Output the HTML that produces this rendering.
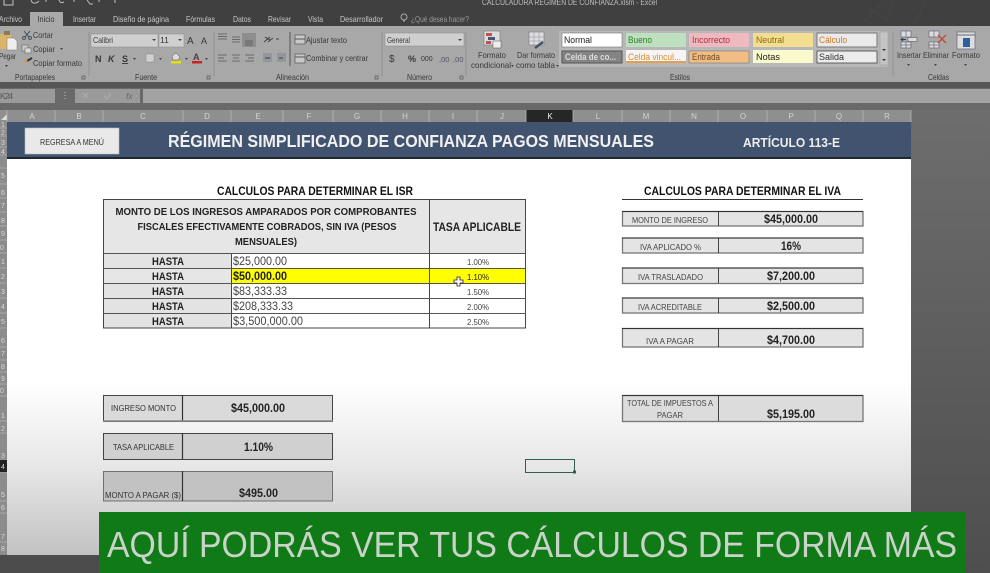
<!DOCTYPE html>
<html><head><meta charset="utf-8"><style>
html,body{margin:0;padding:0;background:#555;width:990px;height:573px;overflow:hidden}
svg{display:block}
text{font-family:"Liberation Sans",sans-serif;white-space:pre}
.r text{fill:#383838;font-size:8.5px}
.b{font-weight:bold}
</style></head><body>
<svg width="990" height="573" viewBox="0 0 990 573" xmlns="http://www.w3.org/2000/svg">
<defs>
<linearGradient id="sheet" x1="0" y1="0" x2="0" y2="1"><stop offset="0" stop-color="#fff"/><stop offset=".6" stop-color="#fff"/><stop offset=".8" stop-color="#e6e6e6"/><stop offset="1" stop-color="#c2c2c2"/></linearGradient>
<linearGradient id="side" x1="0" y1="0" x2="0" y2="1"><stop offset="0" stop-color="#6e6e6e"/><stop offset="1" stop-color="#4e4e4e"/></linearGradient>
<filter id="bl"><feGaussianBlur stdDeviation=".3"/></filter>
</defs>
<rect width="990" height="573" fill="#4c4c4c"/>
<rect x="911" y="103" width="79" height="470" fill="url(#side)"/>

<g filter="url(#bl)">
<!-- title bar -->
<rect width="990" height="26" fill="#3f3f3f"/>
<path d="M860 26l25-26M885 22l8-20M915 24l10-22M870 8l20 14" stroke="#464646" fill="none"/>
<rect x="4" y="-2" width="9" height="7" fill="none" stroke="#c4c4c4"/>
<path d="M31 0c1 4 5 4 8 1M45 1h2M59 0c1 3 3 3 5 2M73 1h2M87 0l3 4h3M98 1h2M115 0v3" stroke="#bbb" fill="none"/>
<text x="482" y="5" font-size="8" fill="#c0c0c0" textLength="175" lengthAdjust="spacingAndGlyphs">CALCULADORA REGIMEN DE CONFIANZA.xlsm - Excel</text>
<g fill="#c8c8c8" font-size="8.500">
<text x="-1" y="22" textLength="23" lengthAdjust="spacingAndGlyphs">Archivo</text>
<text x="73" y="22" textLength="23" lengthAdjust="spacingAndGlyphs">Insertar</text>
<text x="113" y="22" textLength="56" lengthAdjust="spacingAndGlyphs">Diseño de página</text>
<text x="186" y="22" textLength="29" lengthAdjust="spacingAndGlyphs">Fórmulas</text>
<text x="233" y="22" textLength="18" lengthAdjust="spacingAndGlyphs">Datos</text>
<text x="268" y="22" textLength="23" lengthAdjust="spacingAndGlyphs">Revisar</text>
<text x="308" y="22" textLength="15" lengthAdjust="spacingAndGlyphs">Vista</text>
<text x="340" y="22" textLength="43" lengthAdjust="spacingAndGlyphs">Desarrollador</text>
<text x="411" y="22" fill="#9a9a9a" textLength="58" lengthAdjust="spacingAndGlyphs">¿Qué desea hacer?</text>
</g>
<circle cx="404" cy="17" r="3" fill="none" stroke="#aaa"/><path d="M403 21h2" stroke="#aaa"/>
<rect x="30" y="12" width="33" height="15" fill="#a9a9a9"/>

<!-- ribbon -->
<rect y="26" width="990" height="56" fill="#a8a8a8"/>
<rect y="82" width="990" height="6" fill="#565656"/>
<g class="r">
<text x="37.500" y="22" style="fill:#333" textLength="17" lengthAdjust="spacingAndGlyphs">Inicio</text>
<!-- clipboard -->
<rect x="0" y="34" width="11" height="15" fill="#d9b56b"/><rect x="4" y="31" width="6" height="4" fill="#8a7a5a"/><path d="M7 38h7l3 3v9h-10z" fill="#eee" stroke="#777" stroke-width=".5"/>
<text x="-1" y="59" textLength="17" lengthAdjust="spacingAndGlyphs">Pegar</text>
<path d="M5 65h3l-1.500 2z" fill="#444"/>
<path d="M24 31l5 6M30 31l-5 6" stroke="#456" fill="none"/><circle cx="24" cy="38" r="1.500" fill="none" stroke="#456"/><circle cx="30" cy="38" r="1.500" fill="none" stroke="#456"/>
<rect x="22" y="45" width="6" height="6" fill="#ccc" stroke="#666" stroke-width=".6"/><rect x="25" y="48" width="6" height="5" fill="#ddd" stroke="#666" stroke-width=".6"/>
<path d="M27 61l5-3" stroke="#333" stroke-width="2"/><path d="M24 62l3-2" stroke="#c9a040" stroke-width="2"/>
<text x="33" y="38" textLength="20" lengthAdjust="spacingAndGlyphs">Cortar</text>
<text x="33" y="52" textLength="22" lengthAdjust="spacingAndGlyphs">Copiar</text>
<path d="M60 48h3l-1.500 2z" fill="#444"/>
<text x="33" y="66" textLength="49" lengthAdjust="spacingAndGlyphs">Copiar formato</text>
<text x="15" y="80" textLength="40" lengthAdjust="spacingAndGlyphs">Portapapeles</text>
<path d="M89 32v44M214 32v44M382 32v44M466 32v44M893 32v44" stroke="#929292"/>
<path d="M82 76h3v3h-3zM207 76h3v3h-3zM375 76h3v3h-3zM460 76h3v3h-3z" fill="none" stroke="#555" stroke-width=".7"/>

<!-- font -->
<rect x="91" y="34" width="67" height="13" fill="#cfcfcf" stroke="#8a8a8a" stroke-width=".5"/>
<rect x="159" y="34" width="25" height="13" fill="#cfcfcf" stroke="#8a8a8a" stroke-width=".5"/>
<text x="93" y="43" textLength="20" lengthAdjust="spacingAndGlyphs">Calibri</text>
<text x="160" y="43">11</text>
<path d="M152 39h4l-2 2zM178 39h4l-2 2z" fill="#444"/>
<text x="187" y="44" style="font-size:10px">A</text><text x="201" y="44" style="font-size:9px">A</text>
<text x="95" y="62" class="b" style="font-size:9px" textLength="6">N</text>
<text x="108" y="62" class="b" font-style="italic" style="font-size:9px" textLength="6">K</text>
<text x="122" y="62" class="b" text-decoration="underline" style="font-size:9px" textLength="5">S</text>
<path d="M133 58h3l-1.500 2zM159 58h3l-1.500 2zM185 58h3l-1.500 2zM205 58h3l-1.500 2z" fill="#444"/>
<rect x="146" y="54" width="8" height="8" fill="#d0d0d0" stroke="#888" stroke-width=".5"/>
<path d="M172 56l4-3 4 4-2 3h-5z" fill="#ddd" stroke="#555" stroke-width=".5"/>
<rect x="171" y="61" width="10" height="2.500" fill="#e3e000"/>
<text x="193" y="60" class="b" style="fill:#444;font-size:9px">A</text>
<rect x="192" y="61" width="10" height="2.500" fill="#c22"/>
<text x="135" y="80" textLength="22" lengthAdjust="spacingAndGlyphs">Fuente</text>

<!-- align -->
<rect x="242" y="33" width="14" height="14" fill="#8e8e8e"/>
<g stroke="#555" fill="none" stroke-width=".8">
<path d="M218 34h9M218 36.500h9M218 39h9M232 37h8M232 39.500h8M232 42h8M245 41h8M245 43h8M245 45h8"/>
<path d="M218 55h9M218 58h6M218 61h9M232 55h8M233 58h6M232 61h8M245 55h9M248 58h6M245 61h9"/>
</g>
<path d="M264 42l6-5M265 37l5 3M268 42l5-4M276 39h3" stroke="#444" stroke-width="1.100" fill="none"/>
<rect x="263" y="53" width="9" height="9" fill="#969696"/><rect x="277" y="53" width="9" height="9" fill="#969696"/>
<path d="M265 58h5M283 58h-4" stroke="#246" fill="none"/>
<path d="M290 32v34" stroke="#555"/>
<rect x="295" y="35" width="10" height="9" fill="#c8c8c8" stroke="#555" stroke-width=".7"/><path d="M295 39h10" stroke="#555"/>
<rect x="295" y="54" width="10" height="9" fill="#c8c8c8" stroke="#555" stroke-width=".7"/><path d="M295 57h10" stroke="#555"/>
<text x="306" y="43" textLength="41" lengthAdjust="spacingAndGlyphs">Ajustar texto</text>
<text x="306" y="61" textLength="62" lengthAdjust="spacingAndGlyphs">Combinar y centrar</text>
<text x="276" y="80" textLength="33" lengthAdjust="spacingAndGlyphs">Alineación</text>

<!-- number -->
<rect x="385" y="33" width="79" height="13" fill="#cfcfcf" stroke="#8a8a8a" stroke-width=".5"/>
<text x="387" y="43" textLength="23" lengthAdjust="spacingAndGlyphs">General</text>
<path d="M458 39h4l-2 2z" fill="#444"/>
<text x="389" y="62" style="font-size:10px">$</text><text x="408" y="62" class="b" style="font-size:9px">%</text><text x="421" y="61" style="font-size:7px">000</text>
<text x="439" y="62" style="font-size:7.500px;fill:#556">,00</text><text x="453" y="62" style="font-size:7.500px;fill:#556">,00</text>
<text x="407" y="80" textLength="25" lengthAdjust="spacingAndGlyphs">Número</text>

<!-- cond format -->
<rect x="484" y="31" width="16" height="14" fill="#ddd" stroke="#777" stroke-width=".6"/>
<rect x="486" y="33" width="6" height="3" fill="#b55"/><rect x="488" y="37" width="7" height="3" fill="#457"/><rect x="486" y="41" width="5" height="3" fill="#b55"/>
<rect x="493" y="41" width="8" height="7" fill="#eee" stroke="#555" stroke-width=".5"/>
<text x="478" y="58" textLength="28" lengthAdjust="spacingAndGlyphs">Formato</text>
<text x="471" y="68" textLength="40" lengthAdjust="spacingAndGlyphs">condicional</text>
<rect x="529" y="32" width="15" height="13" fill="#ddd" stroke="#778" stroke-width=".6"/>
<path d="M534 32v13M539 32v13M529 37h15M529 41h15" stroke="#889" stroke-width=".5"/>
<path d="M535 48l8-6" stroke="#456" stroke-width="2.500"/>
<text x="517" y="58" textLength="38" lengthAdjust="spacingAndGlyphs">Dar formato</text>
<text x="516" y="68" textLength="39" lengthAdjust="spacingAndGlyphs">como tabla</text>
<path d="M511 65h3l-1.500 2zM556 65h3l-1.500 2z" fill="#444"/>

<!-- styles -->
<rect x="559" y="31" width="329" height="36" fill="#b8b8b8"/>
<rect x="562" y="33" width="60" height="14" fill="#fff" stroke="#777" stroke-width=".6"/>
<rect x="626" y="33" width="60" height="14" fill="#bfe0bf"/>
<rect x="689" y="33" width="60" height="14" fill="#f0b9c0"/>
<rect x="753" y="33" width="60" height="14" fill="#f2dd90"/>
<rect x="817" y="33" width="60" height="14" fill="#eaeaea" stroke="#777"/>
<rect x="562" y="51" width="60" height="12" fill="#848484" stroke="#555"/>
<rect x="626" y="50" width="60" height="13" fill="#f5f5f5"/><rect x="626" y="61" width="60" height="2" fill="#e0a050"/>
<rect x="689" y="51" width="60" height="12" fill="#f2bd84" stroke="#777" stroke-width=".6"/>
<rect x="753" y="50" width="60" height="13" fill="#fafacc"/>
<rect x="817" y="51" width="60" height="12" fill="#ececec" stroke="#444" stroke-width=".8"/>
<text x="564" y="43" style="fill:#222;font-size:9px" textLength="28" lengthAdjust="spacingAndGlyphs">Normal</text>
<text x="628" y="43" style="fill:#2d7a2d;font-size:9px" textLength="24" lengthAdjust="spacingAndGlyphs">Bueno</text>
<text x="692" y="43" style="fill:#a8303c;font-size:9px" textLength="38" lengthAdjust="spacingAndGlyphs">Incorrecto</text>
<text x="756" y="43" style="fill:#8a6a10;font-size:9px" textLength="28" lengthAdjust="spacingAndGlyphs">Neutral</text>
<text x="819" y="43" style="fill:#d07820;font-size:9px" textLength="28" lengthAdjust="spacingAndGlyphs">Cálculo</text>
<text x="565" y="60" style="fill:#ddd;font-size:9px" class="b" textLength="51" lengthAdjust="spacingAndGlyphs">Celda de co...</text>
<text x="628" y="60" style="fill:#d88a30;font-size:9px" textLength="53" lengthAdjust="spacingAndGlyphs">Celda vincul...</text>
<text x="692" y="60" style="fill:#6c4a20;font-size:9px" textLength="28" lengthAdjust="spacingAndGlyphs">Entrada</text>
<text x="756" y="60" style="fill:#222;font-size:9px" textLength="24" lengthAdjust="spacingAndGlyphs">Notas</text>
<text x="819" y="60" style="fill:#333;font-size:9px" textLength="25" lengthAdjust="spacingAndGlyphs">Salida</text>
<rect x="880" y="32" width="8" height="33" fill="#c4c4c4" stroke="#999" stroke-width=".5"/>
<path d="M882 49h4l-2 2zM882 59h4l-2 2z" fill="#333"/>
<text x="670" y="80" textLength="20" lengthAdjust="spacingAndGlyphs">Estilos</text>

<!-- cells -->
<g fill="#ddd" stroke="#667" stroke-width=".7">
<rect x="901" y="31" width="10" height="6"/><path d="M906 31v6"/>
<rect x="901" y="42" width="10" height="6"/><path d="M906 42v6M901 45h10"/>
<rect x="908" y="37.500" width="9" height="4"/>
<rect x="929" y="31" width="10" height="6"/><path d="M934 31v6"/>
<rect x="929" y="42" width="10" height="6"/><path d="M934 42v6M929 45h10"/>
<rect x="957" y="32" width="18" height="17"/>
</g>
<path d="M901 39.500h5M903 38l-2 1.500 2 1.500" stroke="#246" fill="none"/>
<path d="M938 35l8 8M946 35l-8 8" stroke="#c04a30" stroke-width="1.300"/>
<rect x="963" y="38" width="7" height="9" fill="#2f5f9f"/>
<path d="M957 35h18" stroke="#667"/>
<text x="897" y="58" textLength="24" lengthAdjust="spacingAndGlyphs">Insertar</text>
<text x="923" y="58" textLength="26" lengthAdjust="spacingAndGlyphs">Eliminar</text>
<text x="952" y="58" textLength="28" lengthAdjust="spacingAndGlyphs">Formato</text>
<path d="M907 64h3l-1.500 2zM934 64h3l-1.500 2zM964 64h3l-1.500 2z" fill="#444"/>
<text x="928" y="80" textLength="21" lengthAdjust="spacingAndGlyphs">Celdas</text>
</g>

<!-- formula bar -->
<rect y="88" width="990" height="22" fill="#696969"/>
<rect x="-1" y="89" width="56" height="14" fill="#9a9a9a"/>
<text x="0" y="99" font-size="8.500" fill="#555" textLength="13">K24</text>
<rect x="75" y="89" width="65" height="14" fill="#9a9a9a"/>
<path d="M83 93l5 5M88 93l-5 5M104 96l3 3 4-6" stroke="#aeaeae" fill="none"/>
<text x="126" y="99" font-size="8.500" font-style="italic" fill="#666">fx</text>
<rect x="143" y="89" width="847" height="14" fill="#a3a3a3"/>
<path d="M65 92v1M65 95v1M65 98v1" stroke="#c0c0c0"/>

<!-- column headers -->
<rect x="0" y="110" width="911" height="12" fill="#8f8f8f"/>
<path d="M1 120l6-6v6z" fill="#ddd"/>
<rect x="526" y="110" width="47" height="12" fill="#262626"/>
<g stroke="#b5b5b5" stroke-width=".8"><path d="M7 110v12M55 110v12M103 110v12M183 110v12M231 110v12M283 110v12M333 110v12M381 110v12M429 110v12M477 110v12M526 110v12M573 110v12M622 110v12M670 110v12M718 110v12M767 110v12M815 110v12M863 110v12M911 110v12"/></g>
<g font-size="8" fill="#d2d2d2" text-anchor="middle">
<text x="32" y="119">A</text><text x="79" y="119">B</text><text x="143" y="119">C</text><text x="207" y="119">D</text><text x="258" y="119">E</text><text x="309" y="119">F</text><text x="357" y="119">G</text><text x="405" y="119">H</text><text x="453" y="119">I</text><text x="502" y="119">J</text><text x="550" y="119" fill="#eee">K</text><text x="598" y="119">L</text><text x="646" y="119">M</text><text x="694" y="119">N</text><text x="743" y="119">O</text><text x="791" y="119">P</text><text x="839" y="119">Q</text><text x="887" y="119">R</text>
</g>
</g>

<!-- sheet -->
<rect x="7" y="122" width="904" height="433" fill="url(#sheet)"/>
<rect x="0" y="122" width="7" height="433" fill="#8c8c8c"/>
<g stroke="#b0b0b0" stroke-width=".7"><path d="M0 128h7M0 136h7M0 147h7M0 155h7M0 168h7M0 184h7M0 198h7M0 212h7M0 226h7M0 240h7M0 253h7M0 268h7M0 283h7M0 298h7M0 313h7M0 328h7M0 347h7M0 360h7M0 372h7M0 384h7M0 396h7M0 421h7M0 433h7M0 460h7M0 472h7M0 501h7M0 513h7M0 542h7"/></g>
<rect x="0" y="460" width="7" height="12" fill="#222"/>
<g font-size="7" fill="#d8d8d8">
<text x="1" y="127">1</text><text x="1" y="135">2</text><text x="1" y="145">3</text><text x="1" y="154">4</text><text x="1" y="178">5</text><text x="1" y="195">6</text><text x="1" y="208">7</text><text x="1" y="223">8</text><text x="1" y="236">9</text><text x="0" y="250">0</text><text x="1" y="264">1</text><text x="1" y="279">2</text><text x="1" y="294">3</text><text x="1" y="309">4</text><text x="1" y="324">5</text><text x="1" y="343">6</text><text x="1" y="356">7</text><text x="1" y="369">8</text><text x="1" y="381">9</text><text x="0" y="393">0</text><text x="1" y="418">1</text><text x="1" y="431">2</text><text x="1" y="458">3</text><text x="1" y="469">4</text><text x="1" y="497">5</text><text x="1" y="510">6</text><text x="1" y="539">7</text><text x="1" y="551">8</text>
</g>

<!-- banner -->
<rect x="7" y="122" width="904" height="36" fill="#425370"/>
<rect x="7" y="157" width="904" height="2" fill="#1e2630"/>
<rect x="25" y="128" width="94" height="26" fill="#e9e9e9" stroke="#bbb" stroke-width=".6"/>
<text x="40" y="145" font-size="8.500" fill="#333" textLength="64" lengthAdjust="spacingAndGlyphs">REGRESA A MENÚ</text>
<text x="168" y="147" font-size="17.500" class="b" fill="#f0f0f0" textLength="486" lengthAdjust="spacingAndGlyphs">RÉGIMEN SIMPLIFICADO DE CONFIANZA PAGOS MENSUALES</text>
<text x="743" y="147" font-size="13" class="b" fill="#eee" textLength="97" lengthAdjust="spacingAndGlyphs">ARTÍCULO 113-E</text>

<!-- ISR table -->
<text x="217" y="195" font-size="11.500" class="b" fill="#111" textLength="196" lengthAdjust="spacingAndGlyphs">CALCULOS PARA DETERMINAR EL ISR</text>
<rect x="103" y="199" width="422.500" height="54" fill="#e6e6e6"/>
<rect x="103" y="253" width="128" height="75" fill="#e3e3e3"/>
<rect x="231" y="268" width="295" height="15" fill="#ffff00"/>
<rect x="103" y="268" width="128" height="15" fill="#e6e6e6"/>
<g stroke="#333" stroke-width=".9" fill="none">
<rect x="103.500" y="199.500" width="422" height="128.500"/>
<path d="M429.500 199v129M231.500 253v75"/>
<path d="M103 253.500h423M103 268.500h423M103 283.500h423M103 298.500h423M103 313.500h423" stroke="#555"/>
</g>
<g font-size="10.500" class="b" fill="#222" text-anchor="middle">
<text x="266" y="215" textLength="301" lengthAdjust="spacingAndGlyphs">MONTO DE LOS INGRESOS AMPARADOS POR COMPROBANTES</text>
<text x="267" y="230" textLength="259" lengthAdjust="spacingAndGlyphs">FISCALES EFECTIVAMENTE COBRADOS, SIN IVA (PESOS</text>
<text x="266" y="245" textLength="62" lengthAdjust="spacingAndGlyphs">MENSUALES)</text>
</g>
<text x="433" y="231" font-size="11.500" class="b" fill="#222" textLength="88" lengthAdjust="spacingAndGlyphs">TASA APLICABLE</text>
<g font-size="11" class="b" fill="#222">
<text x="152" y="265" textLength="32" lengthAdjust="spacingAndGlyphs">HASTA</text>
<text x="152" y="280" textLength="32" lengthAdjust="spacingAndGlyphs">HASTA</text>
<text x="152" y="295" textLength="32" lengthAdjust="spacingAndGlyphs">HASTA</text>
<text x="152" y="310" textLength="32" lengthAdjust="spacingAndGlyphs">HASTA</text>
<text x="152" y="325" textLength="32" lengthAdjust="spacingAndGlyphs">HASTA</text>
</g>
<g font-size="11.500" fill="#444">
<text x="233" y="265" textLength="54" lengthAdjust="spacingAndGlyphs">$25,000.00</text>
<text x="233" y="280" class="b" fill="#222" textLength="54" lengthAdjust="spacingAndGlyphs">$50,000.00</text>
<text x="233" y="295" textLength="54" lengthAdjust="spacingAndGlyphs">$83,333.33</text>
<text x="233" y="310" textLength="60" lengthAdjust="spacingAndGlyphs">$208,333.33</text>
<text x="233" y="325" textLength="70" lengthAdjust="spacingAndGlyphs">$3,500,000.00</text>
</g>
<g font-size="8" fill="#444">
<text x="467" y="265" textLength="22" lengthAdjust="spacingAndGlyphs">1.00%</text>
<text x="467" y="280" fill="#222" textLength="22" lengthAdjust="spacingAndGlyphs">1.10%</text>
<text x="467" y="295" textLength="22" lengthAdjust="spacingAndGlyphs">1.50%</text>
<text x="467" y="310" textLength="22" lengthAdjust="spacingAndGlyphs">2.00%</text>
<text x="467" y="325" textLength="22" lengthAdjust="spacingAndGlyphs">2.50%</text>
</g>
<path d="M457 277h3v3h3v3h-3v3h-3v-3h-3v-3h3z" fill="#fff" stroke="#222" stroke-width=".8"/>

<!-- bottom left boxes -->
<g stroke="#333" fill="#d6d6d6" stroke-width=".9">
<rect x="103.500" y="395.500" width="229" height="26" fill="#dadada"/>
<rect x="103.500" y="433.500" width="229" height="26" fill="#d0d0d0"/>
<rect x="103.500" y="471.500" width="229" height="29.500" fill="#c2c2c2" stroke="#666"/>
<path d="M182.500 395v26M182.500 433v26M182.500 471v30" stroke-width="1.200"/>
<path d="M103 421h230" stroke="#8a8a8a" stroke-width="1.400"/>
</g>
<g fill="#333" font-size="8.500">
<text x="111" y="411" textLength="65" lengthAdjust="spacingAndGlyphs">INGRESO MONTO</text>
<text x="113" y="450" textLength="61" lengthAdjust="spacingAndGlyphs">TASA APLICABLE</text>
<text x="105" y="498" textLength="76" lengthAdjust="spacingAndGlyphs">MONTO A PAGAR ($)</text>
</g>
<g fill="#222" font-size="11.500" class="b">
<text x="231" y="412" textLength="54" lengthAdjust="spacingAndGlyphs">$45,000.00</text>
<text x="244" y="451" textLength="29" lengthAdjust="spacingAndGlyphs">1.10%</text>
<text x="239" y="497" textLength="39" lengthAdjust="spacingAndGlyphs">$495.00</text>
</g>

<!-- IVA -->
<text x="644" y="195" font-size="11.500" class="b" fill="#111" textLength="197" lengthAdjust="spacingAndGlyphs">CALCULOS PARA DETERMINAR EL IVA</text>
<path d="M622 199.500h241" stroke="#333"/>
<g stroke="#777" stroke-width="1.300" fill="#e4e4e4">
<rect x="622.500" y="211.500" width="240.500" height="14.500"/>
<rect x="622.500" y="238" width="240.500" height="15"/>
<rect x="622.500" y="268" width="240.500" height="15.500"/>
<rect x="622.500" y="298" width="240.500" height="15"/>
<rect x="622.500" y="328.500" width="240.500" height="18.500"/>
<rect x="622.500" y="395.500" width="240.500" height="26" fill="#dcdcdc"/>
<path d="M718.500 211v15M718.500 238v15M718.500 268v15M718.500 298v15M718.500 328v19M718.500 395v26M622 211.500h241M622 238h241M622 268h241M622 298h241M622 328.500h241M622 395.500h241" stroke="#333" stroke-width=".9"/>
</g>
<g fill="#444" font-size="8.500">
<text x="632" y="223" textLength="76" lengthAdjust="spacingAndGlyphs">MONTO DE INGRESO</text>
<text x="640" y="250" textLength="61" lengthAdjust="spacingAndGlyphs">IVA APLICADO %</text>
<text x="638" y="280" textLength="65" lengthAdjust="spacingAndGlyphs">IVA TRASLADADO</text>
<text x="638" y="310" textLength="64" lengthAdjust="spacingAndGlyphs">IVA ACREDITABLE</text>
<text x="646" y="344" textLength="48" lengthAdjust="spacingAndGlyphs">IVA A PAGAR</text>
<text x="627" y="406" textLength="86" lengthAdjust="spacingAndGlyphs">TOTAL DE IMPUESTOS A</text>
<text x="657" y="418" textLength="26" lengthAdjust="spacingAndGlyphs">PAGAR</text>
</g>
<g fill="#222" font-size="11.500" class="b">
<text x="764" y="223" textLength="54" lengthAdjust="spacingAndGlyphs">$45,000.00</text>
<text x="781" y="250" textLength="20" lengthAdjust="spacingAndGlyphs">16%</text>
<text x="767" y="280" textLength="48" lengthAdjust="spacingAndGlyphs">$7,200.00</text>
<text x="767" y="310" textLength="48" lengthAdjust="spacingAndGlyphs">$2,500.00</text>
<text x="767" y="344" textLength="48" lengthAdjust="spacingAndGlyphs">$4,700.00</text>
<text x="767" y="418" textLength="48" lengthAdjust="spacingAndGlyphs">$5,195.00</text>
</g>

<!-- selected cell -->
<rect x="525.500" y="459.500" width="49" height="13" fill="none" stroke="#2f5f4f" stroke-width="1"/>
<rect x="573" y="470.500" width="3" height="3" fill="#2f5f4f"/>

<!-- green caption -->
<rect x="99" y="512" width="866" height="61" fill="#107a17"/>
<text x="107" y="557" font-size="36.500" fill="#c9d3c9" textLength="850" lengthAdjust="spacingAndGlyphs">AQUÍ PODRÁS VER TUS CÁLCULOS DE FORMA MÁS</text>
</svg>
</body></html>
